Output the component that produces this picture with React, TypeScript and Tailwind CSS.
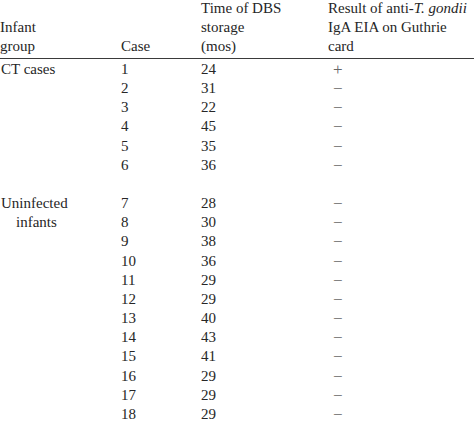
import React from "react";

type Row = { g?: React.ReactNode; c: string; t: string; r: string } | null;

const rows: Row[] = [
  { g: "CT cases", c: "1", t: "24", r: "+" },
  { c: "2", t: "31", r: "−" },
  { c: "3", t: "22", r: "−" },
  { c: "4", t: "45", r: "−" },
  { c: "5", t: "35", r: "−" },
  { c: "6", t: "36", r: "−" },
  null,
  { g: "Uninfected", c: "7", t: "28", r: "−" },
  { g: <span className="pl-[15px]">infants</span>, c: "8", t: "30", r: "−" },
  { c: "9", t: "38", r: "−" },
  { c: "10", t: "36", r: "−" },
  { c: "11", t: "29", r: "−" },
  { c: "12", t: "29", r: "−" },
  { c: "13", t: "40", r: "−" },
  { c: "14", t: "43", r: "−" },
  { c: "15", t: "41", r: "−" },
  { c: "16", t: "29", r: "−" },
  { c: "17", t: "29", r: "−" },
  { c: "18", t: "29", r: "−" },
];

export default function App() {
  return (
    <div className="w-[474px] h-[424px] overflow-hidden bg-white text-[#262626] font-['Liberation_Serif',serif] text-[15px] leading-[19.17px] whitespace-nowrap">
      <div className="grid grid-cols-[121px_80px_127px_1fr] items-end -mt-[1px] pb-[1.5px] border-b-[1.5px] border-[#3a3a3a]">
        <div>
          Infant
          <br />
          group
        </div>
        <div>Case</div>
        <div>
          Time of DBS
          <br />
          storage
          <br />
          (mos)
        </div>
        <div>
          Result of anti-<i>T. gondii</i>
          <br />
          IgA EIA on Guthrie
          <br />
          card
        </div>
      </div>
      <div className="flex flex-col pt-[1px]">
        {rows.map((row, i) =>
          row === null ? (
            <div key={i} className="h-[19.17px]" />
          ) : (
            <div key={i} className="grid grid-cols-[121px_80px_127px_1fr] h-[19.17px]">
              <div className="pl-[1px]">{row.g}</div>
              <div>{row.c}</div>
              <div>{row.t}</div>
              <div className="pl-[5px] text-[17px] text-[#666]">{row.r}</div>
            </div>
          )
        )}
      </div>
    </div>
  );
}
